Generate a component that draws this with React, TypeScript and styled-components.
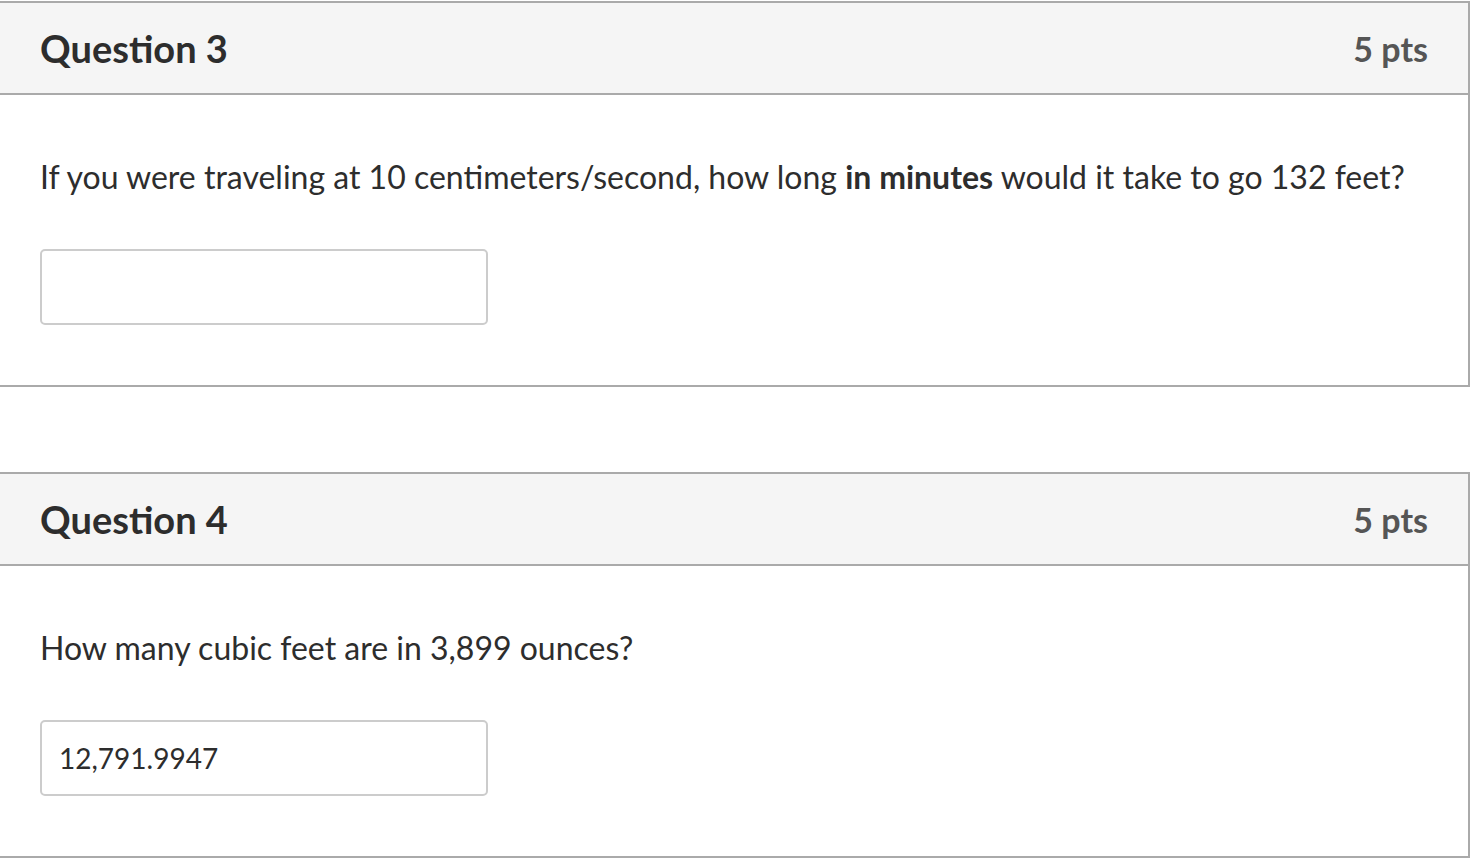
import styled, { createGlobalStyle } from "styled-components";

const GlobalStyle = createGlobalStyle`
  body {
    margin: 0;
    background: #fff;
    font-family: Lato, "Open Sans", sans-serif;
    color: #2d2d2d;
    overflow: hidden;
  }
`;

const Page = styled.div`
  display: flex;
  flex-direction: column;
  gap: 85px;
  padding-top: 1px;
  margin-left: -2px;
  width: 1472px;
`;

const Card = styled.div`
  border: 2px solid #aaaaaa;
  background: #fff;
`;

const Header = styled.div`
  display: flex;
  align-items: center;
  justify-content: space-between;
  height: 90px;
  padding: 0 40px 0 40px;
  background: #f5f5f5;
  border-bottom: 2px solid #aaaaaa;
`;

const Title = styled.h2`
  margin: 0;
  font-size: 38px;
  font-weight: 700;
  color: #2d2d2d;
`;

const Points = styled.span`
  font-size: 34px;
  font-weight: 700;
  color: #555;
`;

const Body = styled.div`
  display: flex;
  flex-direction: column;
  align-items: flex-start;
  padding: 62px 40px 60px;
`;

const Text = styled.p`
  margin: 0 0 52px;
  font-size: 32px;
  line-height: 40px;
  color: #2d2d2d;

  strong {
    font-weight: 700;
  }
`;

const Answer = styled.input`
  box-sizing: border-box;
  width: 448px;
  height: 76px;
  padding: 0 17px;
  border: 2px solid #cccccc;
  border-radius: 5px;
  font-family: Lato, "Open Sans", sans-serif;
  font-size: 28px;
  color: #2d2d2d;
  background: #fff;
  outline: none;
`;

type Question = {
  id: number;
  points: number;
  text: React.ReactNode;
  answer: string;
};

const questions: Question[] = [
  {
    id: 3,
    points: 5,
    text: (
      <>
        If you were traveling at 10 centimeters/second, how long{" "}
        <strong>in minutes</strong> would it take to go 132 feet?
      </>
    ),
    answer: "",
  },
  {
    id: 4,
    points: 5,
    text: <>How many cubic feet are in 3,899 ounces?</>,
    answer: "12,791.9947",
  },
];

export default function App() {
  return (
    <>
      <GlobalStyle />
      <Page>
        {questions.map((q) => (
          <Card key={q.id}>
            <Header>
              <Title>Question {q.id}</Title>
              <Points>{q.points} pts</Points>
            </Header>
            <Body>
              <Text>{q.text}</Text>
              <Answer type="text" defaultValue={q.answer} />
            </Body>
          </Card>
        ))}
      </Page>
    </>
  );
}
